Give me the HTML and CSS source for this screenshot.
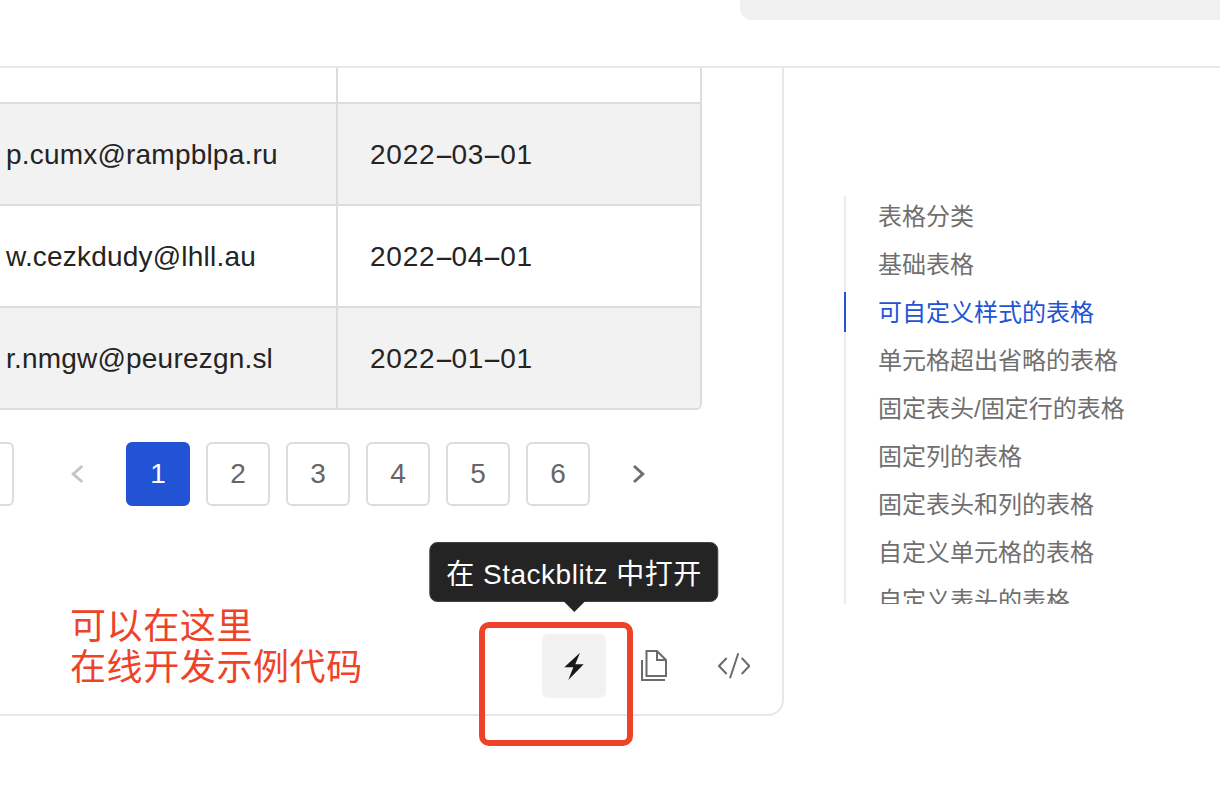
FILE: index.html
```html
<!DOCTYPE html>
<html lang="zh-CN">
<head>
<meta charset="utf-8">
<title>表格</title>
<link rel="stylesheet" href="styles.css">
</head>
<body>
<div class="page">
  <header class="header"><div class="search"></div></header>
  <main class="main">
    <section class="card">
      <div class="table">
        <div class="row row-cut"><div class="cell"></div><div class="cell"></div></div>
        <div class="row row-alt"><div class="cell"><span>p.cumx@rampblpa.ru</span></div><div class="cell"><span class="date">2022<span class="dash">-</span>03<span class="dash">-</span>01</span></div></div>
        <div class="row"><div class="cell"><span>w.cezkdudy@lhll.au</span></div><div class="cell"><span class="date">2022<span class="dash">-</span>04<span class="dash">-</span>01</span></div></div>
        <div class="row row-alt"><div class="cell"><span>r.nmgw@peurezgn.sl</span></div><div class="cell"><span class="date">2022<span class="dash">-</span>01<span class="dash">-</span>01</span></div></div>
      </div>
      <nav class="pager">
        <div class="page-btn page-size"></div>
        <div class="page-arrow">
          <svg width="32" height="32" viewBox="0 0 32 32" fill="none" class="arrow-off"><path d="M20.300 8 11.300 16l9 8" stroke="currentColor" stroke-width="3"/></svg>
        </div>
        <div class="page-btn page-on">1</div>
        <div class="page-btn">2</div>
        <div class="page-btn">3</div>
        <div class="page-btn">4</div>
        <div class="page-btn">5</div>
        <div class="page-btn">6</div>
        <div class="page-arrow">
          <svg width="32" height="32" viewBox="0 0 32 32" fill="none" class="arrow-on"><path d="M12 8l8.700 8-8.700 8" stroke="currentColor" stroke-width="3"/></svg>
        </div>
      </nav>
      <div class="actions">
        <div class="act act-on">
          <svg width="32" height="32" viewBox="0 0 32 32"><path d="M22 2.700 6.300 17.300h9L10.300 30l15.400-15.700h-8.400z" fill="#181818"/></svg>
          <div class="tip">在 Stackblitz 中打开</div>
        </div>
        <div class="act">
          <svg width="32" height="32" viewBox="0 0 32 32" fill="none" stroke="#6b6b6b" stroke-width="2"><path d="M8.500 1h10.500l9 9v16H8.500z"/><path d="M19 1v9h9"/><path d="M4 10v20h23"/></svg>
        </div>
        <div class="act">
          <svg width="32" height="32" viewBox="0 0 32 32" fill="none" stroke="#6b6b6b" stroke-width="2"><path d="M8.700 8 1 16l7.700 8M20.300 3.300 12 28.300M23.700 8l7.600 8-7.600 8"/></svg>
        </div>
      </div>
    </section>
    <aside class="toc">
      <a class="toc-item">表格分类</a>
      <a class="toc-item">基础表格</a>
      <a class="toc-item toc-on">可自定义样式的表格</a>
      <a class="toc-item">单元格超出省略的表格</a>
      <a class="toc-item">固定表头/固定行的表格</a>
      <a class="toc-item">固定列的表格</a>
      <a class="toc-item">固定表头和列的表格</a>
      <a class="toc-item">自定义单元格的表格</a>
      <a class="toc-item">自定义表头的表格</a>
    </aside>
  </main>
  <div class="note">可以在这里<br>在线开发示例代码</div>
  <div class="mark"></div>
</div>
</body>
</html>
```

FILE: styles.css
```css
* { box-sizing: border-box; }
html, body { margin: 0; padding: 0; background: #fff; }
body {
  font-family: "Liberation Sans", "Noto Sans CJK SC", sans-serif;
  color: #242424;
}
.page { position: relative; width: 1220px; height: 804px; overflow: hidden; }

.header { height: 68px; border-bottom: 2px solid #e7e7e7; padding-left: 740px; }
.search { height: 20px; background: #f0f0f0; border-bottom-left-radius: 12px; }

.main { display: flex; align-items: flex-start; }

.card {
  flex: none;
  width: 784px;
  height: 648px;
  border-right: 2px solid #e7e7e7;
  border-bottom: 2px solid #e7e7e7;
  border-bottom-right-radius: 16px;
}

.table {
  width: 730px;
  margin-left: -28px;
  border: 2px solid #dcdcdc;
  border-top: 0;
  border-radius: 0 0 6px 6px;
  overflow: hidden;
}
.row {
  display: grid;
  grid-template-columns: 364px 1fr;
  height: 102px;
  border-bottom: 2px solid #dcdcdc;
  font-size: 28px;
  letter-spacing: 0.2px;
}
.row:last-child { height: 100px; border-bottom: 0; }
.row-cut { height: 36px; }
.row-alt { background: #f2f2f2; }
.cell { display: flex; align-items: center; padding: 2px 0 0 32px; }
.cell:first-child { border-right: 2px solid #dcdcdc; }
.date { letter-spacing: 0.8px; }
.dash { display: inline-block; width: 16px; text-align: center; transform: scaleX(2.1); letter-spacing: 0; }

.pager { display: flex; gap: 16px; margin: 32px 0 0 -50px; }
.page-btn {
  display: flex;
  align-items: center;
  justify-content: center;
  width: 64px;
  height: 64px;
  border: 2px solid #dcdcdc;
  border-radius: 6px;
  font-size: 28px;
  color: #666;
}
.page-size { margin-right: 16px; }
.page-on { background: #2253d4; border-color: #2253d4; color: #fff; }
.page-arrow { display: flex; align-items: center; justify-content: center; width: 64px; height: 64px; }
.arrow-off { color: #c5c5c5; }
.arrow-on { color: #6f6f6f; }

.actions { display: flex; justify-content: flex-end; gap: 16px; margin-top: 128px; padding-right: 16px; }
.act { position: relative; display: flex; align-items: center; justify-content: center; width: 64px; height: 64px; border-radius: 6px; }
.act-on { background: #f2f2f2; }
.tip {
  position: absolute;
  bottom: 96px;
  left: 32px;
  transform: translateX(-50%);
  display: flex;
  align-items: center;
  height: 60px;
  padding: 0 16px;
  background: #242424;
  border: 1px solid #444;
  border-radius: 8px;
  color: #fff;
  font-size: 28px;
  letter-spacing: 0.5px;
  white-space: nowrap;
}
.tip::after {
  content: "";
  position: absolute;
  left: 50%;
  top: 100%;
  margin-left: -11px;
  border: 11px solid transparent;
  border-top-color: #242424;
  border-bottom: 0;
}

.toc {
  flex: none;
  width: 376px;
  height: 408px;
  margin: 128px 0 0 60px;
  box-shadow: inset 2px 0 0 #ececec;
  overflow: hidden;
  display: flex;
  flex-direction: column;
  gap: 8px;
}
.toc-item {
  flex: none;
  height: 40px;
  padding-left: 32px;
  border-left: 2px solid transparent;
  font-size: 24px;
  line-height: 42px;
  color: #6f6f6f;
  white-space: nowrap;
}
.toc-on { color: #2253d4; border-left-color: #2253d4; }

.note {
  position: absolute;
  left: 70px;
  top: 606px;
  font-size: 36px;
  letter-spacing: 0.6px;
  line-height: 41px;
  color: #ee4328;
  white-space: nowrap;
}
.mark {
  position: absolute;
  left: 479px;
  top: 622px;
  width: 154px;
  height: 124px;
  border: 6px solid #ee4328;
  border-radius: 10px;
}
```
